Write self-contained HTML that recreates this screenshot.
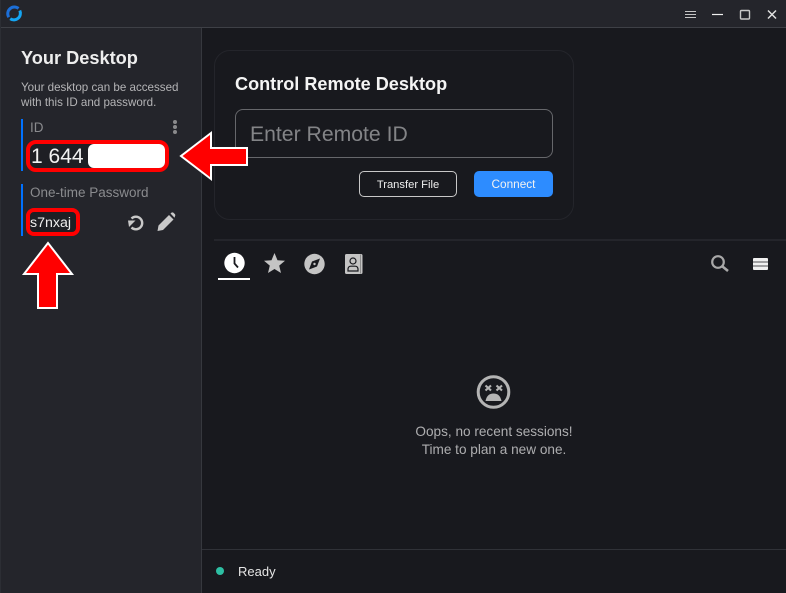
<!DOCTYPE html>
<html><head><meta charset="utf-8"><style>
*{box-sizing:border-box}
html,body{margin:0;padding:0;width:786px;height:593px;overflow:hidden;background:#18191e;font-family:"Liberation Sans",sans-serif}
div,span{position:absolute;white-space:nowrap}
svg{position:absolute;left:0;top:0}
</style></head><body>
<div style="left:0;top:0;width:786px;height:28px;background:#24252b;border-bottom:1px solid #3e4046"></div>
<div style="left:0;top:28px;width:202px;height:565px;background:#24252b;border-right:1px solid #36383e"></div>
<div style="left:0;top:0;width:1px;height:593px;background:#2c2e34"></div>
<div style="left:21px;top:46px;font-size:18.2px;line-height:24px;font-weight:bold;color:#eeeeee">Your Desktop</div>
<div style="left:21px;top:80px;font-size:11.6px;line-height:15px;color:#b4b4b6">Your desktop can be accessed<br>with this ID and password.</div>
<div style="left:21px;top:119px;width:2px;height:52px;background:#0071ff"></div>
<div style="left:21px;top:184px;width:2px;height:52px;background:#0071ff"></div>
<div style="left:30px;top:120px;font-size:13.5px;line-height:16px;color:#8a8b8e">ID</div>
<div style="left:30px;top:185px;font-size:13.5px;line-height:16px;color:#8a8b8e">One-time Password</div>
<div style="left:26px;top:140px;width:143px;height:32px;border:4px solid #f00;border-radius:10px;background:#1e1f24"></div>
<div style="left:31px;top:144px;font-size:21px;line-height:26px;color:#f2f2f2">1 644</div>
<div style="left:88px;top:144px;width:77px;height:24px;background:#fff;border-radius:6px"></div>
<div style="left:26px;top:208px;width:54px;height:28px;border:4px solid #f00;border-radius:8px;background:#1e1f24"></div>
<div style="left:30px;top:214px;font-size:14.2px;line-height:18px;color:#eeeeee">s7nxaj</div>
<div style="left:214px;top:50px;width:360px;height:170px;border:1px solid #24252b;border-radius:16px"></div>
<div style="left:235px;top:72px;font-size:18.1px;line-height:24px;font-weight:bold;color:#f4f4f4">Control Remote Desktop</div>
<div style="left:235px;top:109px;width:318px;height:49px;border:1px solid #66676b;border-radius:8px"></div>
<div style="left:250px;top:121px;font-size:21.2px;line-height:28px;color:#838487">Enter Remote ID</div>
<div style="left:359px;top:171px;width:98px;height:26px;border:1px solid #c8c8c8;border-radius:5px;color:#eee;font-size:11.2px;line-height:26px;text-align:center">Transfer File</div>
<div style="left:474px;top:171px;width:79px;height:26px;background:#2d8cff;border-radius:5px;color:#f2f2f2;font-size:11.8px;line-height:27px;text-align:center">Connect</div>
<div style="left:214px;top:239px;width:572px;height:2px;background:#24252b"></div>
<div style="left:218px;top:278px;width:32px;height:2px;background:#fff"></div>
<div style="left:202px;top:549px;width:584px;height:1px;background:#303238"></div>
<div style="left:216px;top:567px;width:8px;height:8px;border-radius:50%;background:#2dbfa3"></div>
<div style="left:238px;top:563px;font-size:13px;line-height:18px;color:#e4e4e4">Ready</div>
<div style="left:394px;top:423px;width:200px;text-align:center;font-size:13.6px;line-height:18px;color:#aeaeb0">Oops, no recent sessions!<br>Time to plan a new one.</div>
<svg width="786" height="593" viewBox="0 0 786 593" fill="none">
<path d="M8.8 17.2A6.6 6.6 0 0 1 18.5 8.5" stroke="#1c6fd8" stroke-width="3"/>
<path d="M19.8 10.5A6.6 6.6 0 0 1 10.2 18.8" stroke="#14a5f2" stroke-width="3"/>
<path d="M685 11.5H696M685 14.5H696M685 17.5H696" stroke="#c6c6c6" stroke-width="1"/>
<path d="M712 14.5H723" stroke="#f0f0f0" stroke-width="1.2"/>
<rect x="740.5" y="10.5" width="9" height="8.5" rx="1" stroke="#c8c8c8" stroke-width="1.4"/>
<path d="M768 10.5L776 18.5M776 10.5L768 18.5" stroke="#e0e0e0" stroke-width="1.5"/>
<circle cx="175" cy="122" r="2" fill="#8a8a8c"/><circle cx="175" cy="127" r="2" fill="#8a8a8c"/><circle cx="175" cy="132" r="2" fill="#8a8a8c"/>
<path d="M247 148H211V133L181 156L211 179V165H247Z" fill="#f00" stroke="#fff" stroke-width="2"/>
<path d="M48 243L24 274H38V308H57V274H72Z" fill="#f00" stroke="#fff" stroke-width="2"/>
<path d="M131.5 218.5A6.3 6.3 0 1 1 131.5 227.5" stroke="#c9c9c9" stroke-width="2.4"/>
<path d="M128 220.5H135.5L129 227Z" fill="#c9c9c9"/>
<path d="M157.5 231L158.5 225.5L169 215L173.5 219.5L163 230Z" fill="#c9c9c9"/>
<path d="M170.5 213.5L171.5 212.6Q172.5 212 173.5 212.7L175 214.3Q175.7 215.2 175 216.2L174.5 217.8Z" fill="#c9c9c9"/>
<circle cx="234.5" cy="263" r="10.2" fill="#fff"/>
<path d="M234.5 257V263.5L238 267.5" stroke="#18191e" stroke-width="1.8"/>
<path d="M274.5 253L277.5 260.3L285 260.8L279.2 265.6L281 273L274.5 269L268 273L269.8 265.6L264 260.8L271.5 260.3Z" fill="#c4c4c4"/>
<circle cx="314.5" cy="264" r="10.2" fill="#c4c4c4"/>
<path d="M320 258.5L317 266.5L309 269.5L312 261.5Z" fill="#18191e"/>
<circle cx="314.5" cy="264" r="1.2" fill="#c4c4c4"/>
<rect x="345" y="254" width="17.5" height="20" rx="1.5" fill="#c4c4c4"/>
<path d="M360.5 254.5V273.5" stroke="#8d8d8d" stroke-width="1"/>
<circle cx="353" cy="261" r="3" stroke="#18191e" stroke-width="1.2"/>
<path d="M348 271V269.5Q348 266.2 351 266.2H355Q358 266.2 358 269.5V271Z" stroke="#18191e" stroke-width="1.2"/>
<circle cx="718" cy="262" r="5.8" stroke="#a8a8a8" stroke-width="2.2"/>
<path d="M722.5 266.5L728 271" stroke="#a8a8a8" stroke-width="2.6"/>
<rect x="753" y="258" width="15" height="12" rx="1" fill="#f0f0f0"/>
<path d="M753 262H768M753 266H768" stroke="#18191e" stroke-width=".8"/>
<circle cx="493.5" cy="392" r="15.3" stroke="#b4b4b4" stroke-width="3"/>
<path d="M485.5 385.5L491 390.5M491 385.5L485.5 390.5M496.5 385.5L502 390.5M502 385.5L496.5 390.5" stroke="#b4b4b4" stroke-width="2.1"/>
<path d="M485.5 401Q487 393.5 493.5 393.5Q500 393.5 501.5 401Z" fill="#b4b4b4"/>
</svg>
</body></html>
